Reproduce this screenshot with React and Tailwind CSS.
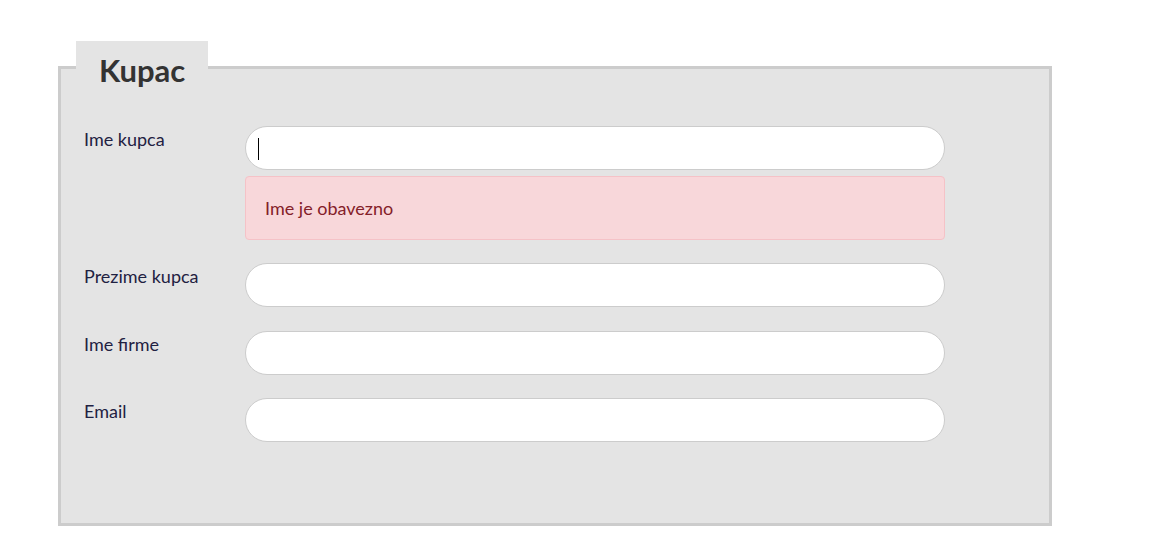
import React from "react";

const font = { fontFamily: "Lato, 'Open Sans', sans-serif" };

function Row({ label, children }) {
  return (
    <div className="flex items-start">
      <label className="w-[161px] shrink-0 pt-[1px] text-[18px] leading-[24px] text-[#1f2142]">{label}</label>
      <div className="w-[700px] flex flex-col gap-[6px]">{children}</div>
    </div>
  );
}

function Input({ caret }) {
  return (
    <div className="relative h-[44px] w-[700px] rounded-full border border-[#cccccc] bg-white">
      {caret && <span className="absolute left-[12px] top-[11px] h-[22px] w-px bg-black" />}
    </div>
  );
}

export default function App() {
  return (
    <div className="min-h-[550px] bg-white pl-[58px] pt-[41px]" style={font}>
      <fieldset className="w-[994px] h-[485px] border-[3px] border-[#cccccc] bg-[#e4e4e4]">
        <legend className="ml-[15px] bg-[#e4e4e4] px-[23px] pt-[6px] text-[31px] font-bold leading-[47px] text-[#333333]">
          Kupac
        </legend>
        <div className="flex flex-col gap-[23px] px-[23px] pt-[32px]">
          <Row label="Ime kupca">
            <Input caret />
            <div className="h-[64px] rounded-[4px] border border-[#f5c2c7] bg-[#f8d7da] px-[19px] pt-[20px] text-[18px] leading-[22px] text-[#842029]">
              Ime je obavezno
            </div>
          </Row>
          <Row label="Prezime kupca">
            <Input />
          </Row>
          <div className="mt-px">
            <Row label="Ime firme">
              <Input />
            </Row>
          </div>
          <Row label="Email">
            <Input />
          </Row>
        </div>
      </fieldset>
    </div>
  );
}
